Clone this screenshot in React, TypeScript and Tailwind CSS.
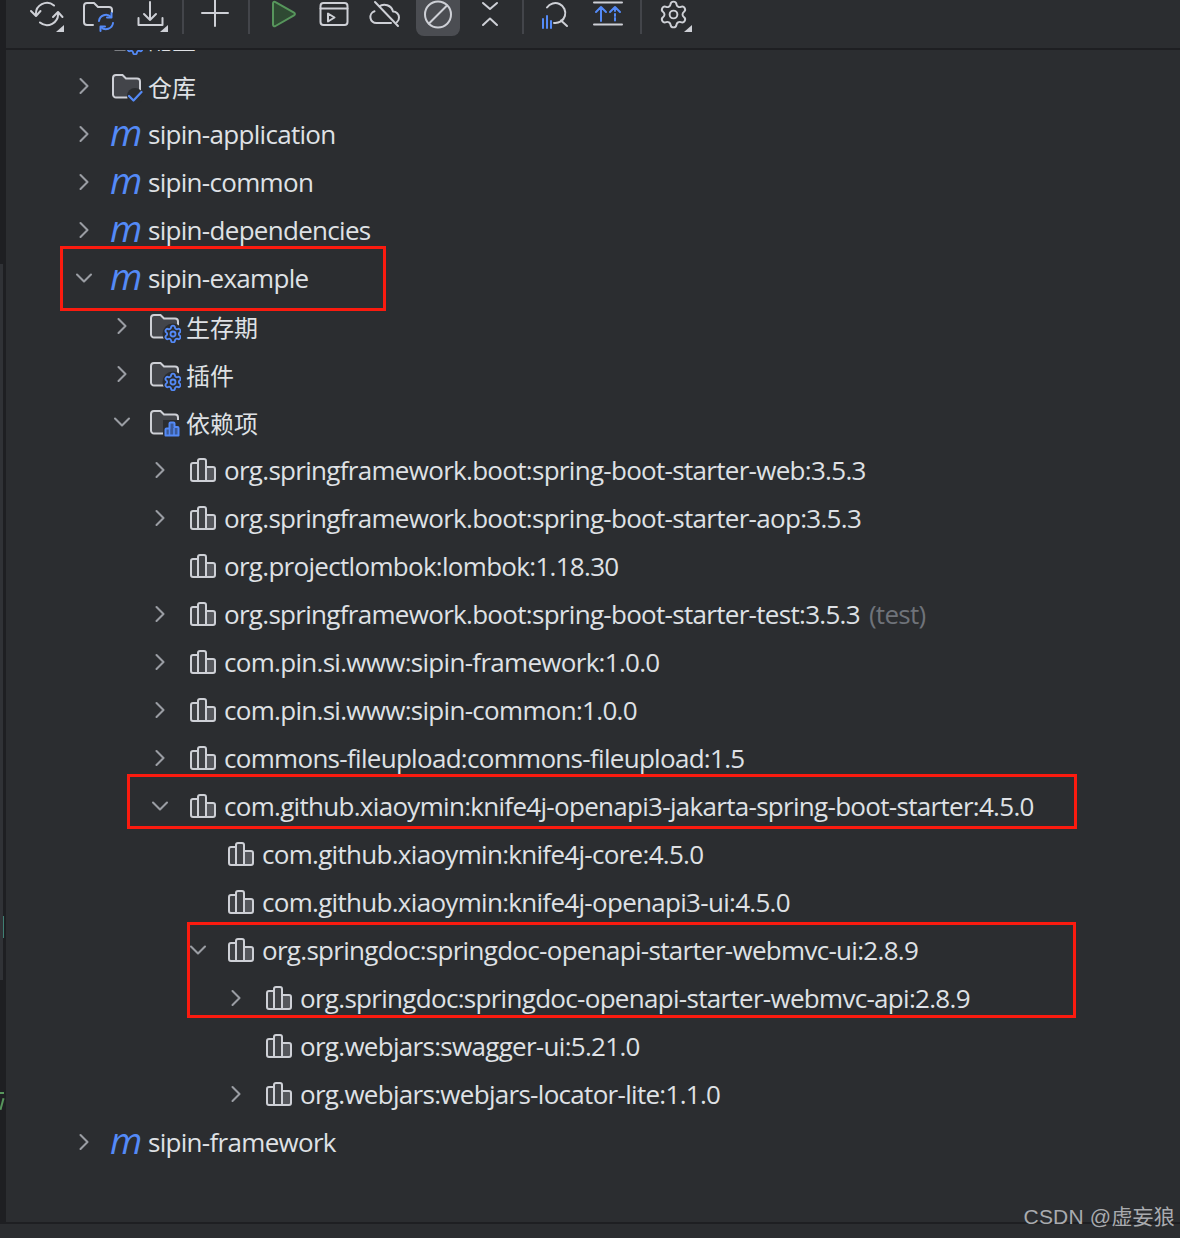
import { ChevronDown, ChevronRight, Settings } from "lucide-react";

const fontStack = { fontFamily: '"Open Sans", "Noto Sans CJK SC", sans-serif' };

type Kind = "module" | "repo" | "gear" | "deps" | "lib";

type RowData = {
  level: number;
  label: string;
  kind: Kind;
  open?: boolean;
  leaf?: boolean;
  cjk?: boolean;
  suffix?: string;
};

const rows: RowData[] = [
  { level: 1, label: "仓库", kind: "repo", cjk: true },
  { level: 1, label: "sipin-application", kind: "module" },
  { level: 1, label: "sipin-common", kind: "module" },
  { level: 1, label: "sipin-dependencies", kind: "module" },
  { level: 1, label: "sipin-example", kind: "module", open: true },
  { level: 2, label: "生存期", kind: "gear", cjk: true },
  { level: 2, label: "插件", kind: "gear", cjk: true },
  { level: 2, label: "依赖项", kind: "deps", open: true, cjk: true },
  { level: 3, label: "org.springframework.boot:spring-boot-starter-web:3.5.3", kind: "lib" },
  { level: 3, label: "org.springframework.boot:spring-boot-starter-aop:3.5.3", kind: "lib" },
  { level: 3, label: "org.projectlombok:lombok:1.18.30", kind: "lib", leaf: true },
  { level: 3, label: "org.springframework.boot:spring-boot-starter-test:3.5.3", kind: "lib", suffix: "(test)" },
  { level: 3, label: "com.pin.si.www:sipin-framework:1.0.0", kind: "lib" },
  { level: 3, label: "com.pin.si.www:sipin-common:1.0.0", kind: "lib" },
  { level: 3, label: "commons-fileupload:commons-fileupload:1.5", kind: "lib" },
  { level: 3, label: "com.github.xiaoymin:knife4j-openapi3-jakarta-spring-boot-starter:4.5.0", kind: "lib", open: true },
  { level: 4, label: "com.github.xiaoymin:knife4j-core:4.5.0", kind: "lib", leaf: true },
  { level: 4, label: "com.github.xiaoymin:knife4j-openapi3-ui:4.5.0", kind: "lib", leaf: true },
  { level: 4, label: "org.springdoc:springdoc-openapi-starter-webmvc-ui:2.8.9", kind: "lib", open: true },
  { level: 5, label: "org.springdoc:springdoc-openapi-starter-webmvc-api:2.8.9", kind: "lib" },
  { level: 5, label: "org.webjars:swagger-ui:5.21.0", kind: "lib", leaf: true },
  { level: 5, label: "org.webjars:webjars-locator-lite:1.1.0", kind: "lib" },
  { level: 1, label: "sipin-framework", kind: "module" },
];

const Corner = ({ x }: { x: number }) => (
  <path d={`M${x + 8} 25v7h-8z`} fill="#ced0d6" stroke="none" />
);

const Folder = ({ children }: { children?: React.ReactNode }) => (
  <svg width="32" height="32" viewBox="0 0 32 32" fill="none" className="-ml-[1px]">
    <path
      d="M2 7a3 3 0 0 1 3-3h6.500l3.500 3.500h11a3 3 0 0 1 3 3v13a3 3 0 0 1-3 3H5a3 3 0 0 1-3-3z"
      fill="#43454a"
      stroke="#ced0d6"
      strokeWidth="2"
    />
    {children}
  </svg>
);

const TreeIcon = ({ kind }: { kind: Kind }) => {
  if (kind === "module") {
    return <span className="block text-[37px] leading-none italic text-[#548af7] -mt-[8px] -ml-[2px]">m</span>;
  }
  if (kind === "repo") {
    return (
      <Folder>
        <circle cx="24" cy="25" r="8" fill="#2b2d30" />
        <path d="M18 25l4.500 4.500 8-8.500" stroke="#548af7" strokeWidth="2.200" strokeLinecap="round" strokeLinejoin="round" />
      </Folder>
    );
  }
  if (kind === "gear") {
    return (
      <Folder>
        <circle cx="24" cy="23" r="10.500" fill="#2b2d30" />
        <Settings x={14} y={13} size={20} strokeWidth={2.200} color="#548af7" />
      </Folder>
    );
  }
  if (kind === "deps") {
    return (
      <Folder>
        <rect x="14" y="13" width="18" height="19" fill="#2b2d30" />
        <path d="M16.500 28.500v-6a1 1 0 0 1 1-1h3v-5a1 1 0 0 1 1-1h3a1 1 0 0 1 1 1v3.500h3a1 1 0 0 1 1 1v7.500z" fill="#3b5a99" stroke="#548af7" strokeWidth="2" strokeLinejoin="round" />
        <path d="M20.500 22v6M25 21v7" stroke="#548af7" strokeWidth="1.500" />
      </Folder>
    );
  }
  return (
    <svg width="28" height="28" viewBox="0 0 28 28" fill="none" className="-mt-[2px]">
      <path d="M10 7H5a2 2 0 0 0-2 2v15a1 1 0 0 0 1 1h6z" fill="#3f4145" />
      <path d="M10 25V4a1 1 0 0 1 1-1h6a1 1 0 0 1 1 1v21z" fill="#3f4145" />
      <path d="M18 11h7a2 2 0 0 1 2 2v11a1 1 0 0 1-1 1h-8z" fill="#55575c" />
      <path d="M10 7H5a2 2 0 0 0-2 2v14a2 2 0 0 0 2 2h20a2 2 0 0 0 2-2V13a2 2 0 0 0-2-2h-7M10 25V5a2 2 0 0 1 2-2h4a2 2 0 0 1 2 2v20" stroke="#ced0d6" strokeWidth="2" strokeLinejoin="round" />
    </svg>
  );
};

const Row = ({ row }: { row: RowData }) => (
  <div
    className="h-[48px] flex items-center whitespace-nowrap text-[#dfe1e5]"
    style={{ paddingLeft: 68 + (row.level - 1) * 38 }}
  >
    <span className="w-[32px] h-[32px] flex items-center justify-center mr-[12px] -mt-[4px] shrink-0 text-[#9a9da3]">
      {!row.leaf && (row.open ? <ChevronDown size={28} strokeWidth={1.800} /> : <ChevronRight size={28} strokeWidth={1.800} />)}
    </span>
    <span className="w-[36px] flex items-center shrink-0 -mt-[2px]">
      <TreeIcon kind={row.kind} />
    </span>
    {row.cjk ? (
      <span className="text-[24px]">{row.label}</span>
    ) : (
      <span className="text-[26px] tracking-[-0.7px] -mt-[4px]">{row.label}</span>
    )}
    {row.suffix && <span className="ml-[9px] -mt-[4px] text-[26px] tracking-[-0.7px] text-[#6f737a]">{row.suffix}</span>}
  </div>
);

const ToolIcon = ({ children, w, active }: { children: React.ReactNode; w: number; active?: boolean }) => (
  <div className={`h-[36px] flex justify-center shrink-0 rounded-b-lg ${active ? "bg-[#4b4d52]" : ""}`} style={{ width: w }}>
    <svg width="36" height="36" viewBox="0 0 36 36" fill="none" stroke="#ced0d6" strokeWidth="2" strokeLinecap="round" strokeLinejoin="round" className="overflow-visible">
      {children}
    </svg>
  </div>
);

const Divider = () => <div className="w-[2px] h-[34px] bg-[#43454a] shrink-0" />;

const Toolbar = () => (
  <div className="h-[48px] flex items-start pl-[15px] shrink-0 overflow-hidden">
    <ToolIcon w={52}>
      <path d="M7 15A11 11 0 0 1 25 5.500M29 13A11 11 0 0 1 11 22.500" />
      <path d="M2 11l5 5 4.500-5M24 17l5-5 4.500 5" />
      <Corner x={27} />
    </ToolIcon>
    <ToolIcon w={52}>
      <path d="M12 25H6a3 3 0 0 1-3-3V6a3 3 0 0 1 3-3h7l4 4h11a3 3 0 0 1 3 3v2" />
      <path d="M18 21a7 7 0 0 1 12-4M32 23a7 7 0 0 1-12 4" stroke="#548af7" />
      <path d="M30.500 13v4.500H26M19.500 31v-4.500H24" stroke="#548af7" />
    </ToolIcon>
    <ToolIcon w={54}>
      <path d="M16 2v18M10 14l6 6 6-6M4.500 18v7h24v-7" />
      <Corner x={26} />
    </ToolIcon>
    <div className="w-[3px]" />
    <Divider />
    <ToolIcon w={62}>
      <path d="M18 0v26M5 13h26" />
    </ToolIcon>
    <div className="w-[2px]" />
    <Divider />
    <ToolIcon w={64}>
      <path d="M9 3.500c0-1.500 1.200-2.200 2.500-1.400l18.500 10.500c1.200.7 1.200 2.100 0 2.800L11.500 26c-1.300.8-2.500.1-2.500-1.400z" fill="#2f4a33" stroke="#57965c" />
    </ToolIcon>
    <ToolIcon w={40}>
      <rect x="4.500" y="3" width="27" height="22" rx="3" />
      <path d="M4.500 8.500h27M12 13.500v8l6.500-4z" />
    </ToolIcon>
    <ToolIcon w={62}>
      <path d="M24 23H9.500a6 6 0 0 1-2-11.700M12 6.500a9 9 0 0 1 14 5 6 6 0 0 1 6 6 5.500 5.500 0 0 1-2 4.500M8 2l23 24" />
    </ToolIcon>
    <ToolIcon w={44} active>
      <circle cx="18" cy="14.500" r="13" />
      <path d="M9 23.500L27 5.500" />
    </ToolIcon>
    <ToolIcon w={60}>
      <path d="M11 3l7 6 7-6M11 25l7-6.500 7 6.500" />
    </ToolIcon>
    <div className="w-[2px]" />
    <Divider />
    <ToolIcon w={62}>
      <path d="M10 7.500a10 10 0 1 1 7 15.500M24 20.500l6 5.500" />
      <path d="M6 28v-9M10 28V16M14 28v-7" stroke="#548af7" />
    </ToolIcon>
    <ToolIcon w={44}>
      <path d="M4 2.500h28M4 24.500h28" />
      <path d="M11 21V8M6 12l5-5 5 5M25 8v3M25 14v2M25 18v2.500M20 12l5-5 5 5" stroke="#548af7" />
    </ToolIcon>
    <div className="w-[10px]" />
    <Divider />
    <ToolIcon w={66}>
      <Settings x={1} y={-1} size={31} strokeWidth={1.500} color="#ced0d6" />
      <Corner x={27} />
    </ToolIcon>
  </div>
);

const App = () => {
  return (
    <div className="relative w-[1180px] h-[1238px] overflow-hidden bg-[#2b2d30] flex" style={fontStack}>
      <div className="relative w-[6px] h-[1222px] bg-[#1e1f22] shrink-0">
        <div className="absolute left-0 top-[264px] w-[3px] h-[716px] bg-[#303236]" />
        <div className="absolute left-[3px] top-[916px] w-[1px] h-[22px] bg-[#3f7f73]" />
        <div className="absolute left-0 top-[1092px] w-[4px] h-[2px] bg-[#57965c]" />
        <div className="absolute left-[1px] top-[1098px] w-[2px] h-[12px] bg-[#57965c] rotate-[15deg]" />
      </div>
      <div className="flex-1 min-w-0 flex flex-col h-[1224px]">
        <Toolbar />
        <div className="h-[2px] bg-[#1e1f22] shrink-0 -ml-[6px]" />
        <div className="flex-1 overflow-hidden -ml-[6px]">
          <div className="-mt-[34px]">
            {/* row scrolled mostly out of view under the toolbar */}
            <Row row={{ level: 1, label: "配置", kind: "gear", cjk: true }} />
            {rows.map((row) => (
              <Row key={row.label} row={row} />
            ))}
          </div>
        </div>
        <div className="h-[2px] bg-[#1e1f22] shrink-0 -ml-[6px]" />
      </div>

      <div className="absolute left-[60px] top-[246px] w-[326px] h-[65px] border-[3px] border-[#fb1b0f]" />
      <div className="absolute left-[127px] top-[774px] w-[950px] h-[55px] border-[3px] border-[#fb1b0f]" />
      <div className="absolute left-[187px] top-[922px] w-[889px] h-[96px] border-[3px] border-[#fb1b0f]" />

      <div className="absolute right-[5px] top-[1203px] text-[21px] tracking-[0.2px] leading-[28px] text-[#a9abaf]" style={{ fontFamily: '"Liberation Sans", "Noto Sans CJK SC", sans-serif' }}>
        CSDN @虚妄狼
      </div>
    </div>
  );
};

export default App;
